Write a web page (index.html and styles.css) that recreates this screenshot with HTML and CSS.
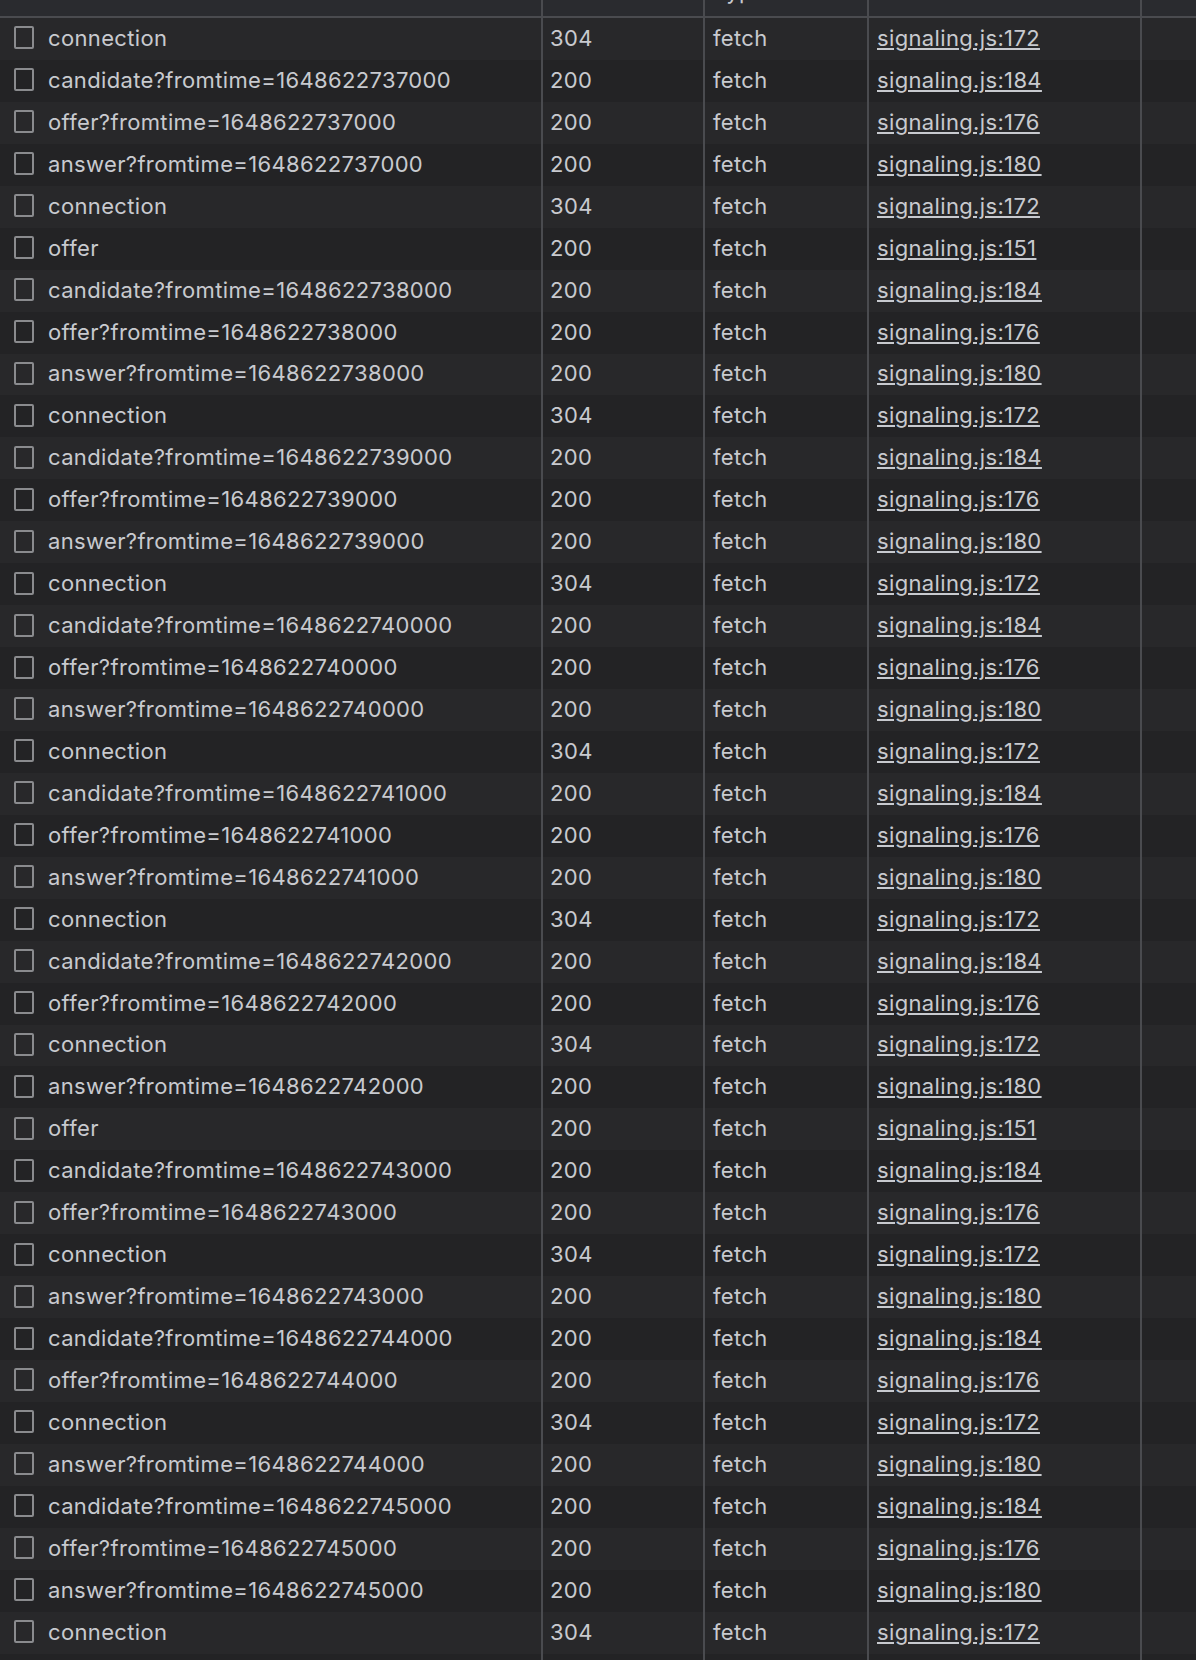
FILE: index.html
```html
<!DOCTYPE html>
<html>
<head>
<meta charset="utf-8">
<link rel="stylesheet" href="styles.css">
</head>
<body>
<div class="grid">
  <div class="row head">
    <div class="cell c-name"><span class="htext">Name</span></div>
    <div class="cell c-status"><span class="htext">Status</span></div>
    <div class="cell c-type"><span class="htext">Type</span></div>
    <div class="cell c-init"><span class="htext">Initiator</span></div>
    <div class="cell c-rest"></div>
  </div>
  <div id="rows"></div>
</div>
<script src="app.js"></script>
</body>
</html>
```
FILE: app.js
```js
const data = [
 ["connection","304",172],
 ["candidate?fromtime=1648622737000","200",184],
 ["offer?fromtime=1648622737000","200",176],
 ["answer?fromtime=1648622737000","200",180],
 ["connection","304",172],
 ["offer","200",151],
 ["candidate?fromtime=1648622738000","200",184],
 ["offer?fromtime=1648622738000","200",176],
 ["answer?fromtime=1648622738000","200",180],
 ["connection","304",172],
 ["candidate?fromtime=1648622739000","200",184],
 ["offer?fromtime=1648622739000","200",176],
 ["answer?fromtime=1648622739000","200",180],
 ["connection","304",172],
 ["candidate?fromtime=1648622740000","200",184],
 ["offer?fromtime=1648622740000","200",176],
 ["answer?fromtime=1648622740000","200",180],
 ["connection","304",172],
 ["candidate?fromtime=1648622741000","200",184],
 ["offer?fromtime=1648622741000","200",176],
 ["answer?fromtime=1648622741000","200",180],
 ["connection","304",172],
 ["candidate?fromtime=1648622742000","200",184],
 ["offer?fromtime=1648622742000","200",176],
 ["connection","304",172],
 ["answer?fromtime=1648622742000","200",180],
 ["offer","200",151],
 ["candidate?fromtime=1648622743000","200",184],
 ["offer?fromtime=1648622743000","200",176],
 ["connection","304",172],
 ["answer?fromtime=1648622743000","200",180],
 ["candidate?fromtime=1648622744000","200",184],
 ["offer?fromtime=1648622744000","200",176],
 ["connection","304",172],
 ["answer?fromtime=1648622744000","200",180],
 ["candidate?fromtime=1648622745000","200",184],
 ["offer?fromtime=1648622745000","200",176],
 ["answer?fromtime=1648622745000","200",180],
 ["connection","304",172]
];
const host = document.getElementById("rows");
let html = "";
data.forEach((d) => {
  html += '<div class="row item">' +
    '<div class="cell c-name"><span class="check"></span><span class="txt">' + d[0] + '</span></div>' +
    '<div class="cell c-status">' + d[1] + '</div>' +
    '<div class="cell c-type">fetch</div>' +
    '<div class="cell c-init"><a class="link">signaling.js:' + d[2] + '</a></div>' +
    '<div class="cell c-rest"></div>' +
    '</div>';
});
html += '<div class="row item"><div class="cell c-name"></div><div class="cell c-status"></div><div class="cell c-type"></div><div class="cell c-init"></div><div class="cell c-rest"></div></div>';
host.innerHTML = html;
```
FILE: styles.css
```css
html, body {
  margin: 0;
  padding: 0;
  background: #232325;
  overflow: hidden;
}
body {
  font-family: Inter, "Liberation Sans", Arial, sans-serif;
  font-size: 22px;
  letter-spacing: 0.35px;
  color: #c8cacf;
  width: 1196px;
  height: 1660px;
}
.row {
  display: flex;
}
.head {
  height: 16px;
  background: #2a2b2f;
  border-bottom: 2px solid #4a4b4f;
  overflow: hidden;
}
.htext {
  display: block;
  line-height: 22px;
  margin-top: -19.6px;
}
.item {
  height: 41.95px;
  align-items: stretch;
}
.item:nth-child(odd) {
  background: #28282a;
}
.item:nth-child(even) {
  background: #232325;
}
.cell {
  box-sizing: border-box;
  border-right: 2px solid #4a4b4f;
  display: flex;
  align-items: center;
  white-space: nowrap;
  overflow: hidden;
}
.item .cell {
  padding-bottom: 2px;
}
.head .cell {
  align-items: flex-start;
}
.c-name {
  width: 543px;
  padding-left: 14px;
}
.head .c-name {
  padding-left: 48px;
}
.c-status {
  width: 162px;
  padding-left: 7px;
}
.c-type {
  width: 164px;
  padding-left: 8px;
}
.c-init {
  width: 273px;
  padding-left: 8px;
}
.c-rest {
  flex: 1;
  border-right: none;
}
.check {
  box-sizing: border-box;
  width: 20px;
  height: 23px;
  border: 2px solid #8a8b8e;
  border-radius: 2px;
  margin-right: 14px;
  flex: none;
}
.link {
  color: #c8cacf;
  text-decoration: underline;
  text-decoration-thickness: 1.5px;
  text-underline-offset: 2px;
}
```
